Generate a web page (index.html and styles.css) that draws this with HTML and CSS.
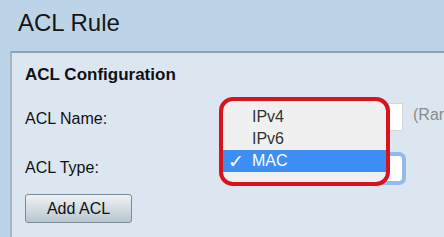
FILE: index.html
```html
<!DOCTYPE html>
<html lang="en">
<head>
    <meta charset="UTF-8">
    <meta name="viewport" content="width=device-width, initial-scale=1.0">
    <title>ACL Rule</title>
    <link rel="stylesheet" href="styles.css">
</head>
<body>

<div class="page-header">
    <h1>ACL Rule</h1>
</div>

<div class="panel">
    <h2 class="panel-title">ACL Configuration</h2>

    <div class="form-row">
        <label class="form-label" for="acl-name">ACL Name:</label>
        <input type="text" class="form-input" id="acl-name">
        <span class="form-hint">(Range: 1-32 characters)</span>
    </div>

    <div class="form-row type-row">
        <label class="form-label" for="acl-type">ACL Type:</label>
        <div class="form-select" id="acl-type"><span class="select-arrows">&#8597;</span></div>
    </div>

    <button class="btn">Add ACL</button>
</div>

<!-- open select menu -->
<div class="select-menu">
    <div class="menu-item">IPv4</div>
    <div class="menu-item">IPv6</div>
    <div class="menu-item selected"><span class="check">&#10003;</span>MAC</div>
</div>

<!-- annotation -->
<div class="highlight-box"></div>

</body>
</html>
```

FILE: styles.css
```css
body {
    margin: 0;
    width: 444px;
    height: 237px;
    overflow: hidden;
    position: relative;
    background-color: #bdd4e8;
    font-family: "Liberation Sans", Arial, sans-serif;
    color: #111;
}
.page-header {
    height: 51px;
    padding-left: 18px;
    box-sizing: border-box;
    padding-top: 9px;
}
.page-header h1 {
    margin: 0;
    font-size: 24px;
    line-height: 28px;
    font-weight: normal;
    color: #151515;
}
.panel {
    margin-left: 10px;
    height: 186px;
    box-sizing: border-box;
    border-top: 2px solid #8ea2b5;
    border-left: 2px solid #a3b6c8;
    background-color: #dce6f1;
    padding: 12px 0 0 13px;
}
.panel-title {
    margin: 0;
    font-size: 17px;
    line-height: 20px;
    font-weight: bold;
}
.form-row {
    display: flex;
    align-items: center;
    height: 30px;
    margin-top: 17px;
    white-space: nowrap;
}
.type-row {
    margin-top: 19px;
}
.form-label {
    width: 205px;
    flex-shrink: 0;
    font-size: 16px;
    position: relative;
    top: 2px;
}
.form-input {
    width: 173px;
    height: 28px;
    box-sizing: border-box;
    border: 1px solid #d6d6d6;
    background-color: #fff;
    margin: 0;
    flex-shrink: 0;
}
.form-hint {
    margin-left: 10px;
    font-size: 16px;
    color: #8b8b8b;
    position: relative;
    top: -2px;
}
.form-select {
    width: 173px;
    height: 27px;
    box-sizing: border-box;
    border: 1px solid #9bb8dc;
    border-radius: 4px;
    background-color: #fff;
    box-shadow: 0 0 0 3px #8dbcf2;
    flex-shrink: 0;
    text-align: right;
    position: relative;
    top: 2px;
}
.select-arrows {
    font-size: 11px;
    line-height: 25px;
    color: #444;
    padding-right: 14px;
}
.btn {
    margin-top: 13px;
    width: 107px;
    height: 29px;
    font-family: "Liberation Sans", Arial, sans-serif;
    font-size: 16px;
    color: #111;
    border: 1px solid #7b8a96;
    border-radius: 3px;
    background: linear-gradient(#eef2f5, #d3dce2 50%, #b9c6cf);
    padding: 0;
}
.select-menu {
    position: absolute;
    left: 223px;
    top: 101px;
    width: 163px;
    height: 81px;
    box-sizing: border-box;
    padding-top: 5px;
    background-color: #f0f0f0;
    border-radius: 6px;
}
.menu-item {
    height: 22px;
    line-height: 22px;
    padding-left: 29px;
    font-size: 16px;
    color: #333;
    position: relative;
}
.menu-item.selected {
    background-color: #3d8ef5;
    color: #fff;
}
.check {
    position: absolute;
    left: 5px;
    top: 0;
    font-size: 19px;
    font-family: "DejaVu Sans", sans-serif;
}
.highlight-box {
    position: absolute;
    left: 219px;
    top: 97px;
    width: 171px;
    height: 89px;
    box-sizing: border-box;
    border: 4px solid #d8131c;
    border-radius: 14px;
}
```
